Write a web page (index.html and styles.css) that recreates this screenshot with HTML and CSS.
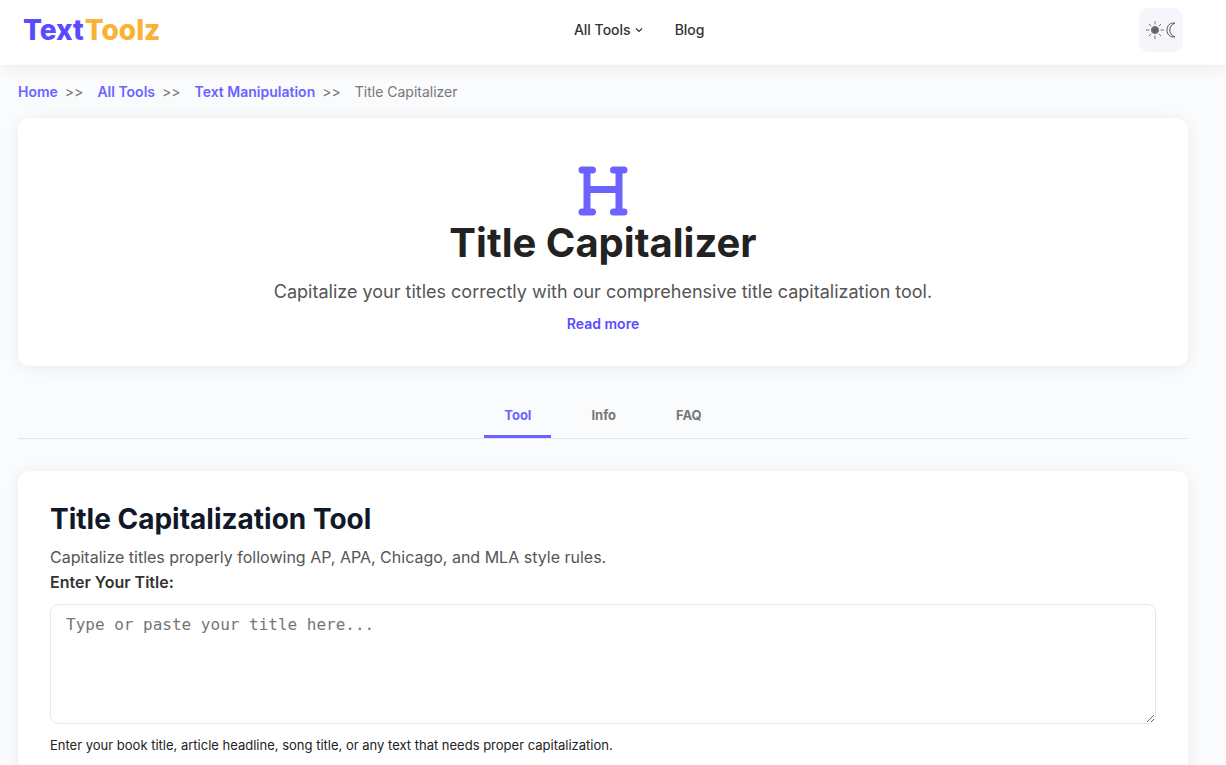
FILE: index.html
```
<!DOCTYPE html>
<html lang="en">
<head>
  <meta charset="UTF-8">
  <meta name="viewport" content="width=device-width, initial-scale=1.0">
  <title>Title Capitalizer - TextToolz</title>
  <link rel="stylesheet" href="styles.css">
</head>
<body>
  <header class="site-header">
    <a class="logo" href="#"><span>Text</span><span class="logo-accent">Toolz</span></a>
    <nav class="main-nav">
      <a href="#">All Tools
        <svg class="chevron" viewBox="0 0 8 8" aria-hidden="true"><path d="M1 2.5 4 5.5 7 2.5"/></svg>
      </a>
      <a href="#">Blog</a>
    </nav>
    <button class="theme-toggle" type="button" aria-label="Toggle theme">
      <svg class="sun" viewBox="0 0 18 18" aria-hidden="true">
        <circle cx="9" cy="9" r="3.600"/>
        <path d="M9 0v3.500M9 14.500V18M0 9h3.500M14.500 9H18M2.800 2.800l2.400 2.400M12.800 12.800l2.400 2.400M2.800 15.200l2.400-2.400M12.800 5.200l2.400-2.400"/>
      </svg>
      <svg class="moon" viewBox="0 0 10 16" aria-hidden="true">
        <path d="M9 1.200C4 .2 1 3.700 1 8s3 7.800 8 6.800C5.300 13.500 3.800 11 3.800 8S5.300 2.500 9 1.200z"/>
      </svg>
    </button>
  </header>

  <main class="container">
    <nav class="breadcrumb" aria-label="Breadcrumb">
      <a href="#">Home</a><span class="sep">&gt;&gt;</span>
      <a href="#">All Tools</a><span class="sep">&gt;&gt;</span>
      <a href="#">Text Manipulation</a><span class="sep">&gt;&gt;</span>
      <span>Title Capitalizer</span>
    </nav>

    <section class="card hero">
      <svg class="hero-icon" viewBox="0 0 50 50" aria-hidden="true">
        <path d="M4 4h10.500M35.500 4H46M4 46h10.500M35.500 46H46M9 4v42M41 4v42M9 23.500h32"/>
      </svg>
      <h1>Title Capitalizer</h1>
      <p>Capitalize your titles correctly with our comprehensive title capitalization tool.</p>
      <a class="read-more" href="#info">Read more</a>
    </section>

    <div class="tabs" role="tablist">
      <button class="tab active" type="button" role="tab" aria-selected="true">Tool</button>
      <button class="tab" type="button" role="tab" aria-selected="false">Info</button>
      <button class="tab" type="button" role="tab" aria-selected="false">FAQ</button>
    </div>

    <section class="card tool">
      <h2>Title Capitalization Tool</h2>
      <p class="tool-intro">Capitalize titles properly following AP, APA, Chicago, and MLA style rules.</p>
      <label for="title-input">Enter Your Title:</label>
      <textarea id="title-input" placeholder="Type or paste your title here..."></textarea>
      <p class="hint">Enter your book title, article headline, song title, or any text that needs proper capitalization.</p>
    </section>
  </main>
</body>
</html>
```

FILE: styles.css
```
* {
  box-sizing: border-box;
}
body {
  margin: 0;
  font-family: Inter, "Liberation Sans", sans-serif;
  background-color: #fafbfd;
  color: #222222;
}
h1, h2, p {
  margin: 0;
}
a {
  color: #6c63ff;
  text-decoration: none;
}

/* header */
.site-header {
  display: flex;
  justify-content: space-between;
  align-items: flex-start;
  padding: 8px 43px 13px 23px;
  background-color: #ffffff;
  box-shadow: 0 2px 16px rgba(0, 0, 0, 0.07);
}
.logo {
  display: flex;
  gap: 1px;
  font-size: 28px;
  line-height: 44px;
  font-weight: 800;
  color: #5b4bff;
}
.logo-accent {
  color: #f9b233;
}
.main-nav {
  display: flex;
  gap: 32px;
  padding-right: 21px;
  font-size: 14px;
  line-height: 44px;
  font-weight: 500;
}
.main-nav a {
  display: flex;
  align-items: center;
  gap: 4px;
  color: #333333;
}
.chevron {
  width: 8px;
  height: 8px;
  fill: none;
  stroke: #333333;
  stroke-width: 1.2;
}
.theme-toggle {
  display: flex;
  align-items: center;
  justify-content: center;
  gap: 2px;
  width: 44px;
  height: 44px;
  padding: 0;
  border: 0;
  border-radius: 10px;
  background-color: #f5f6fc;
}
.sun {
  width: 18px;
  height: 18px;
  fill: #666666;
  stroke: #777777;
}
.moon {
  width: 10px;
  height: 16px;
  fill: none;
  stroke: #555555;
}

.container {
  padding: 17px 38px 40px 18px;
}
.breadcrumb {
  display: flex;
  margin-bottom: 16px;
  font-size: 14px;
  line-height: 20px;
  color: #777777;
}
.breadcrumb a {
  font-weight: 600;
}
.sep {
  margin: 0 14px 0 7px;
}
.card {
  padding: 32px;
  border-radius: 12px;
  background-color: #ffffff;
  box-shadow: 0 2px 16px rgba(0, 0, 0, 0.07);
}

/* hero */
.hero {
  display: flex;
  flex-direction: column;
  align-items: center;
  padding-top: 48px;
  text-align: center;
}
.hero-icon {
  width: 50px;
  height: 50px;
  fill: none;
  stroke: #6c63ff;
  stroke-width: 7;
  stroke-linecap: round;
}
.hero h1 {
  font-size: 40px;
  line-height: 54px;
  font-weight: 700;
}
.hero p {
  margin-top: 8px;
  font-size: 18px;
  line-height: 28px;
  color: #555555;
}
.read-more {
  margin-top: 8px;
  font-size: 14px;
  line-height: 20px;
  font-weight: 600;
  color: #5b4bff;
}

/* tabs */
.tabs {
  display: flex;
  justify-content: center;
  gap: 20px;
  margin: 28px 0 32px;
  border-bottom: 1px solid #e2e5ea;
}
.tab {
  padding: 13px 20px 11px;
  border: 0;
  border-bottom: 3px solid transparent;
  background: none;
  font-family: inherit;
  font-size: 13px;
  line-height: 17px;
  font-weight: 700;
  color: #777777;
}
.tab.active {
  color: #6c63ff;
  border-bottom-color: #6c63ff;
}

/* tool */
.tool h2 {
  font-size: 28px;
  line-height: 32px;
  font-weight: 700;
  color: #111827;
}
.tool-intro {
  margin-top: 10px;
  font-size: 16px;
  line-height: 25px;
  color: #555555;
}
.tool label {
  display: block;
  margin-bottom: 9px;
  font-size: 16px;
  line-height: 25px;
  font-weight: 600;
  color: #333333;
}
.tool textarea {
  display: block;
  width: 100%;
  height: 120px;
  padding: 10px 15px;
  border: 1px solid #e5e7eb;
  border-radius: 8px;
  font-family: "DejaVu Sans Mono", monospace;
  font-size: 16px;
  line-height: 19px;
  resize: vertical;
}
.tool textarea::placeholder {
  color: #757575;
}
.hint {
  margin-top: 11px;
  font-size: 13px;
  line-height: 20px;
}
```
